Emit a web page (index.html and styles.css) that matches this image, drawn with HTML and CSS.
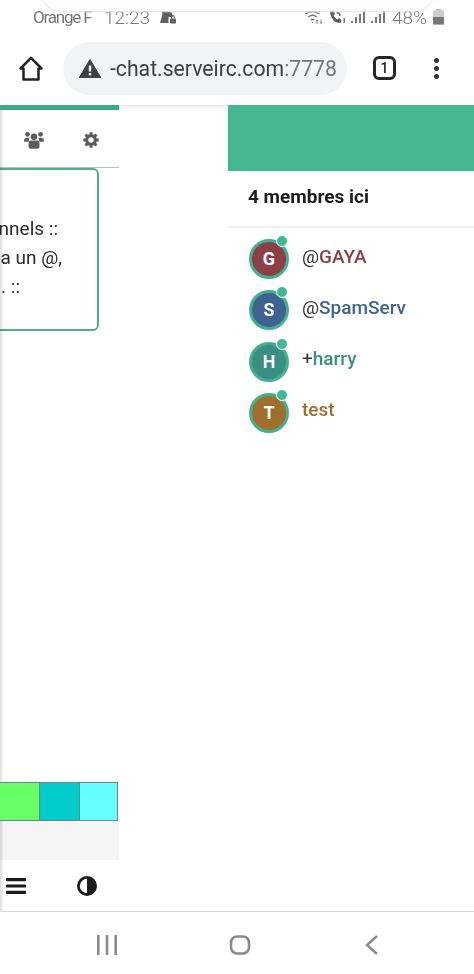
FILE: index.html
```html
<!DOCTYPE html>
<html>
<head>
  <meta charset="utf-8">
  <link rel="stylesheet" href="styles.css">
</head>
<body>
  <div class="phone">
    <div class="notif-edge"></div>

    <div class="status-bar">
      <span class="carrier">Orange F</span>
      <span class="clock">12:23</span>
      <svg class="st-pic" width="17" height="14" viewBox="0 0 17 14">
        <path d="M0 13 L2.5 4 L1.5 1.5 H11 L12.5 5 V13 Z" fill="#5f5f5f"/>
        <rect x="8.5" y="7" width="8.5" height="7" fill="#fff"/>
        <rect x="10" y="8.5" width="6" height="5" rx="1" fill="#5f5f5f"/>
        <path d="M11.5 8.5 V7 a1.5 1.5 0 0 1 3 0 V8.5" fill="none" stroke="#5f5f5f" stroke-width="1"/>
      </svg>
      <span class="status-space"></span>
      <svg class="st-wifi" width="20" height="14" viewBox="0 0 20 14" fill="none" stroke="#777" stroke-width="1.3">
        <path d="M0.5 4 Q7.5 -1 14.5 4"/>
        <path d="M3 7 Q7.5 3.5 12 7"/>
        <path d="M5.5 10 Q7.5 8.5 9.5 10"/>
        <path d="M7.5 12 v1" stroke-width="1.6"/>
        <path d="M12 10 v4 M10.8 11.2 L12 10 L13.2 11.2 M16 13.5 v-4 M14.8 12.3 L16 13.5 L17.2 12.3" stroke-width="0.9"/>
      </svg>
      <svg class="st-call" width="18" height="14" viewBox="0 0 18 14">
        <path d="M1.5 1 L4.5 0.5 L6 4 L4.5 5.5 Q6 8.5 8.5 9.5 L10 8 L12.5 10 L11.5 13 Q3 13 1 3 Z" fill="#5a5a5a"/>
        <path d="M7.5 2.5 Q11 2.5 11 6" fill="none" stroke="#5a5a5a" stroke-width="1.3"/>
        <rect x="14.5" y="8" width="1.5" height="5" fill="#777"/>
      </svg>
      <svg class="st-bars" width="17" height="12" viewBox="0 0 17 12" fill="#777">
        <rect x="1" y="10" width="2" height="2"/><rect x="5" y="6" width="2" height="6"/><rect x="9" y="3" width="2" height="9"/><rect x="13" y="0" width="2" height="12"/>
      </svg>
      <svg class="st-bars" width="17" height="12" viewBox="0 0 17 12" fill="#777">
        <rect x="1" y="10" width="2" height="2"/><rect x="5" y="6" width="2" height="6"/><rect x="9" y="3" width="2" height="9"/><rect x="13" y="0" width="2" height="12"/>
      </svg>
      <span class="battery-pct">48%</span>
      <svg class="st-batt" width="11" height="16" viewBox="0 0 11 16">
        <rect x="3" y="0" width="5" height="2" fill="#bbb"/>
        <rect x="0" y="1.5" width="11" height="14" rx="1" fill="#ccc"/>
        <rect x="0" y="8" width="11" height="7.5" fill="#777"/>
      </svg>
    </div>

    <div class="toolbar">
      <svg class="home-icon" width="24" height="25" viewBox="0 0 24 25" fill="none" stroke="#222" stroke-width="2.5" stroke-linejoin="round">
        <path d="M1.5 12.5 L12 1.8 L22.5 12.5 H19.5 V23.5 H4.5 V12.5 Z"/>
      </svg>
      <div class="url-pill">
        <svg class="warn-icon" width="22" height="19" viewBox="0 0 22 19">
          <path d="M11 0.5 L21.8 18.7 H0.2 Z" fill="#3c4043" stroke="#3c4043" stroke-linejoin="round"/>
          <rect x="9.8" y="6.5" width="2.4" height="6" fill="#f1f3f4"/>
          <rect x="9.8" y="14" width="2.4" height="2.4" fill="#f1f3f4"/>
        </svg>
        <span class="url-text">-chat.serveirc.com<span class="url-port">:7778</span></span>
      </div>
      <div class="tab-count">1</div>
      <div class="menu-dots"><i></i><i></i><i></i></div>
    </div>

    <div class="main">
      <div class="chat-col">
        <div class="green-bar"></div>
        <div class="chat-tabs">
          <svg width="20" height="18" viewBox="0 0 22 19" fill="#5c5c5c">
            <circle cx="11" cy="6" r="3.6"/>
            <circle cx="3.8" cy="3.2" r="2.6"/>
            <circle cx="18.2" cy="3.2" r="2.6"/>
            <path d="M0 11 Q0 7 3 7 H6 Q5.2 9 5.3 11.5 H1 Q0 11.5 0 11 Z"/>
            <path d="M22 11 Q22 7 19 7 H16 Q16.8 9 16.7 11.5 H21 Q22 11.5 22 11 Z"/>
            <path d="M7.5 10 H14.5 Q17 10 17 13.5 V17 Q17 19 15 19 H7 Q5 19 5 17 V13.5 Q5 10 7.5 10 Z"/>
          </svg>
          <svg width="16" height="16" viewBox="0 0 17 17" fill="none" stroke="#5c5c5c">
            <circle cx="8.5" cy="8.5" r="4.6" stroke-width="3.4"/>
            <path d="M8.5 0.3 V3 M8.5 14 V16.7 M0.3 8.5 H3 M14 8.5 H16.7 M2.7 2.7 L4.6 4.6 M12.4 12.4 L14.3 14.3 M14.3 2.7 L12.4 4.6 M4.6 12.4 L2.7 14.3" stroke-width="3.2"/>
          </svg>
        </div>
        <div class="motd">
          <div class="motd-line line-a">:: Bienvenue sur les channels ::</div>
          <div class="motd-line line-b">Un opérateur a un @,</div>
          <div class="motd-line line-c">Bonne discussion... ::</div>
        </div>
        <div class="col-space"></div>
        <div class="swatches">
          <div class="swatch sw-green"></div>
          <div class="swatch sw-teal"></div>
          <div class="swatch sw-cyan"></div>
        </div>
        <div class="swatch-foot"></div>
        <div class="chat-tools">
          <svg width="20" height="16" viewBox="0 0 20 16" fill="#1c1c1c">
            <rect y="0" width="20" height="3.2" rx="0.8"/>
            <rect y="6.4" width="20" height="3.2" rx="0.8"/>
            <rect y="12.8" width="20" height="3.2" rx="0.8"/>
          </svg>
          <svg width="20" height="20" viewBox="0 0 20 20">
            <circle cx="10" cy="10" r="8.6" fill="#fff" stroke="#1c1c1c" stroke-width="2.8"/>
            <path d="M10 1 A9 9 0 0 1 10 19 Z" fill="#1c1c1c"/>
          </svg>
        </div>
      </div>

      <div class="members">
        <div class="members-top"></div>
        <div class="members-title">4 membres ici</div>
        <div class="member-list">
          <div class="member">
            <div class="avatar av-red">G<span class="online"></span></div>
            <span class="nick">@<b class="c-red">GAYA</b></span>
          </div>
          <div class="member">
            <div class="avatar av-blue">S<span class="online"></span></div>
            <span class="nick">@<b class="c-blue">SpamServ</b></span>
          </div>
          <div class="member">
            <div class="avatar av-teal">H<span class="online"></span></div>
            <span class="nick">+<b class="c-teal">harry</b></span>
          </div>
          <div class="member">
            <div class="avatar av-brown">T<span class="online"></span></div>
            <span class="nick"><b class="c-brown">test</b></span>
          </div>
        </div>
      </div>
    </div>

    <div class="nav-bar">
      <svg class="nav-recent" width="22" height="20" viewBox="0 0 22 20" fill="#8a8a8a">
        <rect x="1" y="0" width="2.6" height="20"/>
        <rect x="9.7" y="0" width="2.6" height="20"/>
        <rect x="18.4" y="0" width="2.6" height="20"/>
      </svg>
      <svg class="nav-home" width="22" height="20" viewBox="0 0 22 20" fill="none" stroke="#8a8a8a" stroke-width="2.6">
        <rect x="2" y="1.5" width="18" height="17" rx="6"/>
      </svg>
      <svg class="nav-back" width="14" height="20" viewBox="0 0 14 20" fill="none" stroke="#8a8a8a" stroke-width="2.4">
        <path d="M12 1 L2 10 L12 19"/>
      </svg>
    </div>
  </div>
</body>
</html>
```

FILE: styles.css
```css
html, body {
  margin: 0;
  padding: 0;
  background: #fff;
}

.phone {
  width: 474px;
  height: 974px;
  position: relative;
  display: flex;
  flex-direction: column;
  overflow: hidden;
  font-family: Roboto, "Liberation Sans", sans-serif;
  color: #222;
}

/* the bottom of a notification sliding over the status bar */
.notif-edge {
  position: absolute;
  top: -20px;
  left: 40px;
  right: 39px;
  height: 31px;
  background: #fdfdfd;
  border-radius: 0 0 22px 22px;
  box-shadow: 0 1px 2px #e4e4e4;
}

/* status bar */
.status-bar {
  height: 35px;
  flex: none;
  display: flex;
  align-items: center;
  box-sizing: border-box;
  padding: 0 30px 1px 33px;
  color: #777;
}

.carrier {
  font-size: 17px;
  letter-spacing: -1.2px;
  width: 71px;
  white-space: nowrap;
  overflow: hidden;
}

.clock {
  font-size: 19px;
  font-weight: 300;
}

.st-pic {
  margin-left: 10px;
}

.status-space {
  flex: 1;
}

.st-call {
  margin-left: 4px;
}

.st-bars {
  margin-left: 3px;
}

.battery-pct {
  font-size: 19px;
  font-weight: 300;
  margin-left: 5px;
}

.st-batt {
  margin-left: 6px;
}

/* browser toolbar */
.toolbar {
  height: 70px;
  flex: none;
  display: flex;
  align-items: center;
  box-sizing: border-box;
  padding: 0 0 4px 19px;
}

.url-pill {
  width: 284px;
  height: 53px;
  margin-left: 20px;
  border-radius: 27px;
  background: #f1f3f4;
  display: flex;
  align-items: center;
  padding-left: 16px;
  box-sizing: border-box;
}

.url-text {
  margin-left: 9px;
  font-size: 21.2px;
  color: #3c4043;
  white-space: nowrap;
}

.url-port {
  color: #72777b;
}

.tab-count {
  width: 23px;
  height: 24px;
  margin-left: 26px;
  box-sizing: border-box;
  border: 3px solid #262626;
  border-radius: 6px;
  font-size: 14px;
  font-weight: 500;
  line-height: 18px;
  text-align: center;
}

.menu-dots {
  margin-left: 38px;
  display: flex;
  flex-direction: column;
  gap: 3px;
}

.menu-dots i {
  display: block;
  width: 5px;
  height: 5px;
  border-radius: 50%;
  background: #333;
}

/* page */
.main {
  flex: 1;
  min-height: 0;
  display: flex;
  box-shadow: inset 0 5px 4px -4px #ddd;
}

.chat-col {
  width: 119px;
  flex: none;
  display: flex;
  flex-direction: column;
  position: relative;
  overflow: hidden;
}

.chat-col::before {
  content: "";
  position: absolute;
  left: 0;
  top: 5px;
  bottom: 0;
  width: 3px;
  background: linear-gradient(to right, #dedede, #f4f4f4);
  mix-blend-mode: multiply;
}

.green-bar {
  height: 5px;
  flex: none;
  background: #3aad88;
}

.chat-tabs {
  height: 58px;
  flex: none;
  box-sizing: border-box;
  border-bottom: 1px solid #bdbdbd;
  display: flex;
  align-items: center;
  gap: 39px;
  padding: 2px 0 0 24px;
}

.motd {
  flex: none;
  width: 301px;
  height: 163px;
  margin-left: -202px;
  box-sizing: border-box;
  border: 2.5px solid #4bb08f;
  border-radius: 6px;
  padding-top: 44px;
  font-size: 19px;
  line-height: 29px;
  color: #2a2a2a;
  white-space: nowrap;
  text-align: right;
}

.line-a {
  padding-right: 39px;
}

.line-b {
  padding-right: 35px;
}

.line-c {
  padding-right: 77px;
}

.col-space {
  flex: 1;
}

.swatches {
  height: 39px;
  flex: none;
  display: flex;
  position: relative;
}

.swatch {
  flex: none;
  box-sizing: border-box;
  border: 1px solid #6f8585;
  margin-right: -1px;
}

.sw-green {
  width: 40px;
  background: #66ff66;
  border-left: 0;
}

.sw-teal {
  width: 41px;
  background: #00cccc;
}

.sw-cyan {
  width: 39px;
  background: #66ffff;
  margin-right: 0;
}

.swatch-foot {
  height: 39px;
  flex: none;
  background: #f5f5f5;
}

.chat-tools {
  height: 51px;
  flex: none;
  display: flex;
  align-items: center;
  gap: 51px;
  padding-left: 6px;
}

/* members panel */
.members {
  margin-left: 109px;
  flex: 1;
  display: flex;
  flex-direction: column;
}

.members-top {
  height: 66px;
  flex: none;
  background: #45b892;
}

.members-title {
  height: 57px;
  flex: none;
  box-sizing: border-box;
  border-bottom: 2px solid #f0f0f0;
  padding: 15px 0 0 20px;
  font-size: 19px;
  font-weight: 700;
  line-height: 22px;
  color: #1c1c1c;
}

.member-list {
  display: flex;
  flex-direction: column;
  gap: 11.33px;
  padding: 11px 0 0 21px;
}

.member {
  display: flex;
  align-items: center;
  gap: 13px;
}

.avatar {
  width: 40px;
  height: 40px;
  position: relative;
  box-sizing: border-box;
  border: 3px solid #45b08f;
  border-radius: 50%;
  color: #fff;
  font-size: 18px;
  font-weight: 700;
  line-height: 34px;
  text-align: center;
}

.online {
  position: absolute;
  top: -7px;
  left: 24px;
  width: 12px;
  height: 12px;
  box-sizing: border-box;
  border: 1px solid #fff;
  border-radius: 50%;
  background: #3dba94;
}

.av-red {
  background: #8b3f47;
}

.av-blue {
  background: #3f6391;
}

.av-teal {
  background: #3a8f82;
}

.av-brown {
  background: #a06f2e;
}

.nick {
  font-size: 19px;
  color: #333;
  margin-top: -6px;
}

.nick b {
  font-weight: 500;
}

.c-red {
  color: #8b3f47;
}

.c-blue {
  color: #3f6391;
}

.c-teal {
  color: #3a8f82;
}

.c-brown {
  color: #a06f2e;
}

/* android nav */
.nav-bar {
  height: 63px;
  flex: none;
  box-sizing: border-box;
  border-top: 1px solid #d8d8d8;
  display: flex;
  align-items: center;
  padding: 3px 0 0 96px;
}

.nav-home {
  margin-left: 111px;
}

.nav-back {
  margin-left: 114px;
}
```
